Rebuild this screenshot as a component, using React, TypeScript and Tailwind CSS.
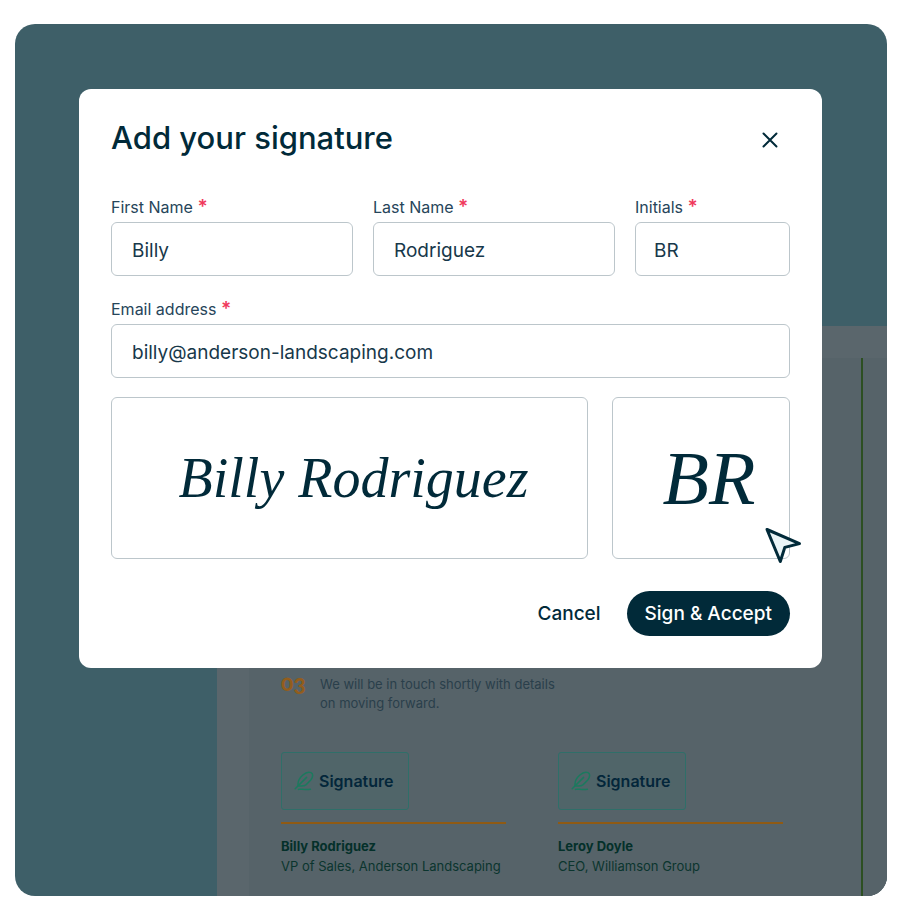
import React from "react";

const fieldClass =
  "block h-[54px] w-full rounded-md border border-[#bcc6cb] bg-white pt-0.5 text-[19px] text-[#17384a] outline-none focus:border-[#012a39]";

type FieldProps = {
  id: string;
  label: string;
  value: string;
  type?: string;
  inset?: string;
};

function Field({ id, label, value, type = "text", inset = "px-5" }: FieldProps) {
  return (
    <div className="min-w-0">
      <label htmlFor={id} className="mb-[3px] block h-6 text-[16px] leading-6 text-[#26455a]">
        {label} <span className="text-[19px] leading-none font-semibold text-[#f0395c]">*</span>
      </label>
      <input id={id} type={type} defaultValue={value} required className={`${fieldClass} ${inset}`} />
    </div>
  );
}

function CloseIcon() {
  return (
    <svg width="16" height="16" viewBox="0 0 16 16" fill="none" aria-hidden="true">
      <path d="M1.5 1.5 14.5 14.5M14.5 1.5 1.5 14.5" stroke="#012a39" strokeWidth="2" strokeLinecap="round" />
    </svg>
  );
}

function QuillIcon() {
  return (
    <svg width="20" height="20" viewBox="0 0 20 20" fill="none" stroke="#1b7a5e" strokeWidth="1.5" strokeLinecap="round" strokeLinejoin="round" aria-hidden="true">
      <path d="M1.2 17.8 12.6 6.4" />
      <path d="M4.2 14.8C3.4 10.8 4.9 7.4 8.6 4.2C11.6 1.6 14.6 .6 17 1.6C19.4 2.7 19 6.2 16.8 9L12.2 13.6C10.4 15.2 7.6 15.4 4.2 14.8Z" />
      <path d="M4.6 18.4C7.6 17.4 9.6 19.4 16.4 18.3" />
    </svg>
  );
}

function PointerIcon() {
  return (
    <svg className="absolute -right-[13px] -bottom-[6px]" width="38" height="38" viewBox="0 0 38 38" fill="none" aria-hidden="true">
      <path d="M3 3.5 35.5 17.6 20.8 21.4 16.3 35.5Z" fill="#eaf4f7" stroke="#012a39" strokeWidth="3" strokeLinejoin="round" />
    </svg>
  );
}

function Signer({ name, role }: { name: string; role: string }) {
  return (
    <div className="w-[225px] text-[13px] leading-5 whitespace-nowrap text-[#0b352e]">
      <button
        type="button"
        className="flex h-[58px] w-32 items-center gap-[5px] rounded-[3px] border border-[#2f6f69] bg-[#506569] pl-3 text-[16px] font-semibold text-[#03263a]"
      >
        <QuillIcon />
        Signature
      </button>
      <div className="my-3 h-[2px] bg-[#8f5a14]" />
      <p className="font-bold text-[#04302a]">{name}</p>
      <p>{role}</p>
    </div>
  );
}

function ProposalPage() {
  return (
    <div className="mt-[302px] ml-[202px] flex flex-1 bg-[#5a666c] pt-8 pl-8">
      <div className="flex flex-1 bg-[#566369]">
        <div className="flex-1 px-8 pt-[317px]">
          <div className="flex">
            <span className="w-[39px] font-['Lato'] text-[23px] leading-[14px] font-black text-[#925d1d] oldstyle-nums">03</span>
            <p className="text-[13px] leading-[19px] text-[#2a3f4b]">
              We will be in touch shortly with details
              <br />
              on moving forward.
            </p>
          </div>
          <div className="mt-[39px] flex gap-[52px]">
            <Signer name="Billy Rodriguez" role="VP of Sales, Anderson Landscaping" />
            <Signer name="Leroy Doyle" role="CEO, Williamson Group" />
          </div>
        </div>
        <div className="mr-6 w-[2px] bg-[#2c4f22]" />
      </div>
    </div>
  );
}

function SignatureDialog() {
  return (
    <form
      role="dialog"
      aria-labelledby="dialog-title"
      onSubmit={(e: React.FormEvent) => e.preventDefault()}
      className="absolute top-[65px] right-[65px] left-16 rounded-xl bg-white p-8"
    >
      <header className="flex items-start justify-between">
        <h1 id="dialog-title" className="text-[31px] leading-[34px] font-medium text-[#012a39]">
          Add your signature
        </h1>
        <button type="button" aria-label="Close" className="flex h-[38px] w-10 items-center justify-center">
          <CloseIcon />
        </button>
      </header>

      <div className="mt-9 grid grid-cols-[242fr_242fr_155fr] gap-5">
        <Field id="first-name" label="First Name" value="Billy" />
        <Field id="last-name" label="Last Name" value="Rodriguez" />
        <Field id="initials" label="Initials" value="BR" inset="px-[18px]" />
      </div>
      <div className="mt-[21px]">
        <Field id="email" label="Email address" value="billy@anderson-landscaping.com" type="email" />
      </div>

      <div className="mt-[19px] grid grid-cols-[477fr_178fr] gap-6 font-['Liberation_Serif',serif] whitespace-nowrap text-[#012a39] italic">
        <div className="flex h-[162px] items-center justify-center rounded-md border border-[#bcc6cb] pl-2 text-[56px]">
          Billy Rodriguez
        </div>
        <div className="relative flex h-[162px] items-center justify-center rounded-md border border-[#bcc6cb] pl-4 text-[76px]">
          BR
          <PointerIcon />
        </div>
      </div>

      <footer className="mt-8 flex items-center justify-end gap-[26px] text-[19px] font-medium">
        <button type="button" className="h-[45px] pt-0.5 text-[#012a39]">
          Cancel
        </button>
        <button type="submit" className="h-[45px] rounded-full bg-[#012a39] px-[18px] pt-0.5 text-white">
          Sign &amp; Accept
        </button>
      </footer>
    </form>
  );
}

export default function App() {
  return (
    <main className="min-h-screen bg-white pt-6 pr-[17px] pb-[23px] pl-[15px] font-['Inter',sans-serif]">
      <section className="relative flex min-h-[872px] flex-col overflow-hidden rounded-[20px] bg-[#3e5f68]">
        <ProposalPage />
        <SignatureDialog />
      </section>
    </main>
  );
}
